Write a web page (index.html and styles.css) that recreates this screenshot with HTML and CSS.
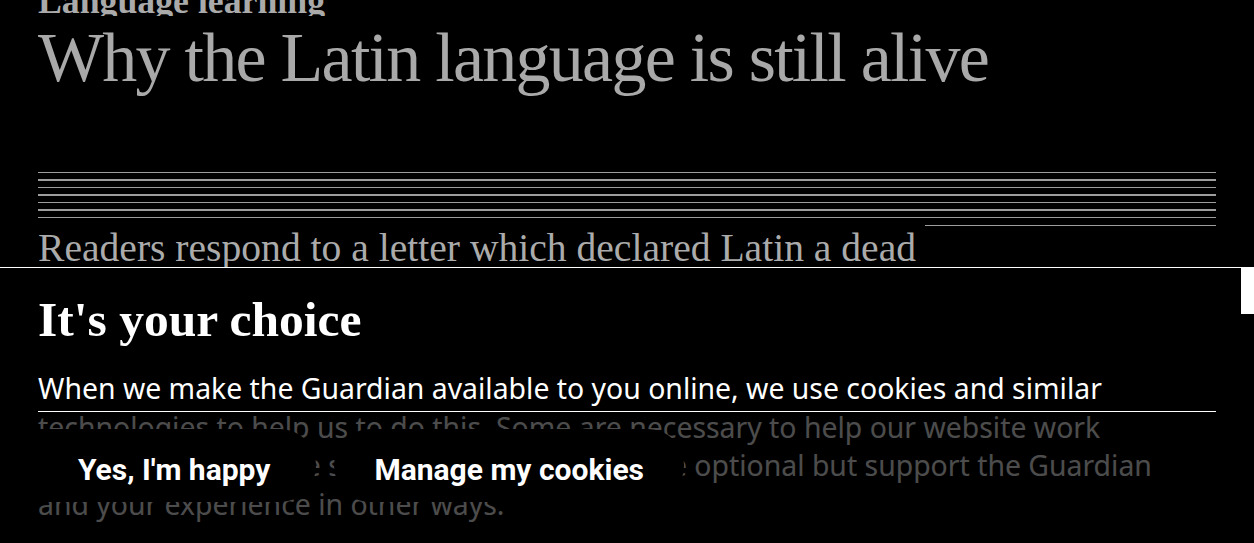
FILE: index.html
```html
<!DOCTYPE html>
<html lang="en">
<head>
<meta charset="utf-8">
<title>Why the Latin language is still alive</title>
<link rel="stylesheet" href="styles.css">
</head>
<body>
<main class="page">
  <div class="kicker"><span class="kicker-text">Language learning</span></div>
  <h1 class="headline">Why the Latin language is still alive</h1>
  <div class="stripes"></div>
  <div class="stripe-tail"></div>
  <p class="standfirst">Readers respond to a letter which declared Latin a dead language</p>
</main>

<section class="banner">
  <div class="scroll-thumb"></div>
  <h2 class="banner-title">It's your choice</h2>
  <p class="banner-text">When we make the Guardian available to you online, we use cookies and similar technologies to help us to do this. Some are necessary to help our website work properly and can't be switched off, and some are optional but support the Guardian and your experience in other ways.</p>
  <div class="fade">
    <button class="btn btn-primary">Yes, I'm happy</button>
    <button class="btn btn-secondary">Manage my cookies</button>
  </div>
</section>
</body>
</html>
```
FILE: styles.css
```css
html, body {
  margin: 0;
  padding: 0;
  background: #000;
}

.page {
  padding: 0 38px;
  font-family: "Liberation Serif", "DejaVu Serif", serif;
  color: #a9a9a9;
}

.kicker {
  height: 15.5px;
  overflow: hidden;
}

.kicker-text {
  display: block;
  margin-top: -16.6px;
  font-weight: 700;
  font-size: 35.75px;
  line-height: 36px;
  color: #aaa;
}

.headline {
  margin: 7px 0 0;
  font-weight: 400;
  font-size: 70px;
  line-height: 70px;
  letter-spacing: -1.75px;
  color: #a9a9a9;
}

.stripes {
  margin-top: 79.6px;
  height: 46.5px;
  background: repeating-linear-gradient(to bottom, #9d9d9d 0, #9d9d9d 1.5px, transparent 1.5px, transparent 7.5px);
}

.stripe-tail {
  margin: 6px 0 0 auto;
  width: 291px;
  height: 1.5px;
  background: #9d9d9d;
}

.standfirst {
  margin: 3px 0 0;
  max-width: 887px;
  font-size: 39.6px;
  line-height: 39.6px;
  color: #ababab;
}

.banner {
  position: fixed;
  left: 0;
  right: 0;
  top: 267px;
  bottom: 0;
  border-top: 1px solid #fff;
  background: #000;
  padding: 24px 38px 0;
  overflow: hidden;
  color: #fff;
}

.scroll-thumb {
  position: absolute;
  top: 0;
  right: 0;
  width: 13px;
  height: 46px;
  background: #fff;
}

.banner-title {
  margin: 0;
  font-family: "Liberation Serif", "DejaVu Serif", serif;
  font-weight: 700;
  font-size: 49.5px;
  line-height: 56px;
}

.banner-text {
  margin: 21px 0 0;
  max-width: 1150px;
  font-family: "Noto Sans", "Open Sans", sans-serif;
  font-size: 28.4px;
  line-height: 38.6px;
}

.fade {
  position: absolute;
  top: 143px;
  left: 38px;
  right: 38px;
  bottom: 0;
  border-top: 1px solid #fff;
  background: rgba(0, 0, 0, 0.7);
  padding-top: 17px;
  display: flex;
  align-items: flex-start;
  gap: 18px;
}

.btn {
  box-sizing: border-box;
  height: 73px;
  border: 0;
  margin: 0;
  background: #000;
  color: #fff;
  font-family: Roboto, "Noto Sans", sans-serif;
  font-weight: 700;
  font-size: 30px;
  line-height: 36px;
  padding-top: 23px;
  padding-bottom: 14px;
  white-space: nowrap;
  cursor: pointer;
}

.btn-primary {
  padding-left: 40px;
  padding-right: 46px;
  border-radius: 0 36px 36px 0;
}

.btn-secondary {
  padding-left: 40px;
  padding-right: 40px;
  border-radius: 36px;
}
```
